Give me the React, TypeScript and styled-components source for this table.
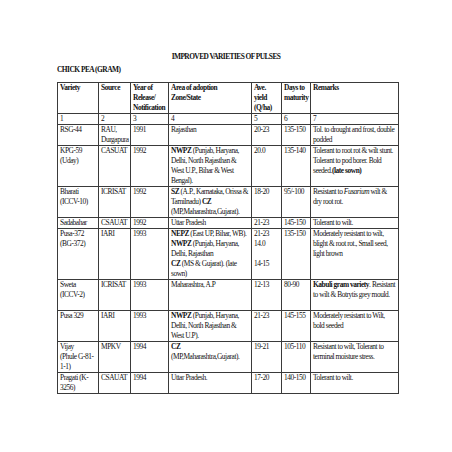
import React from 'react'
import styled, { createGlobalStyle } from 'styled-components'

const GlobalStyle = createGlobalStyle`
  html, body {
    margin: 0;
    padding: 0;
    background: #ffffff;
  }
  body {
    font-family: "Liberation Serif", "Times New Roman", serif;
    color: #111111;
  }
`

const Page = styled.div`
  width: 452px;
  height: 452px;
  padding-top: 52px;
  box-sizing: border-box;
  overflow: hidden;
`

const Title = styled.h1`
  margin: 0;
  font-size: 7.4px;
  line-height: 10px;
  font-weight: bold;
  letter-spacing: -0.55px;
  text-align: center;
`

const Section = styled.h2`
  margin: 3px 0 0 57px;
  font-size: 7.4px;
  line-height: 10px;
  font-weight: bold;
  letter-spacing: -0.5px;
`

const Table = styled.table`
  margin: 7px 0 0 57px;
  border-collapse: collapse;
  table-layout: fixed;
  width: 341px;
`

const Row = styled.tr<{ $h: number }>`
  height: ${props => props.$h}px;
`

const Cell = styled.td<{ $head?: boolean }>`
  border: 1px solid #3a3a3a;
  padding: 0 2px;
  vertical-align: top;
  font-size: 7.4px;
  line-height: 10px;
  letter-spacing: -0.44px;
  white-space: nowrap;
  overflow: hidden;
  font-weight: ${props => (props.$head ? 'bold' : 'normal')};
`

const cols = [41, 32, 38, 83, 30, 29, 88]

const head: React.ReactNode[] = [
  'Variety',
  'Source',
  <>Year of<br />Release/<br />Notification</>,
  <>Area of adoption<br />Zone/State</>,
  <>Ave.<br />yield<br />(Q/ha)</>,
  <>Days to<br />maturity</>,
  'Remarks',
]

const rows: { h: number; cells: React.ReactNode[] }[] = [
  { h: 10, cells: ['1', '2', '3', '4', '5', '6', '7'] },
  {
    h: 20,
    cells: [
      'RSG-44',
      <>RAU,<br />Durgapura</>,
      '1991',
      'Rajasthan',
      '20-23',
      '135-150',
      <>Tol. to drought and frost, double<br />podded</>,
    ],
  },
  {
    h: 41,
    cells: [
      <>KPG-59<br />(Uday)</>,
      'CASUAT',
      '1992',
      <><b>NWPZ</b> (Punjab, Haryana,<br />Delhi, North Rajasthan &amp;<br />West U.P., Bihar &amp; West<br />Bengal).</>,
      '20.0',
      '135-140',
      <>Tolerant to root rot &amp; wilt stunt.<br />Tolerant to pod borer. Bold<br />seeded.<b>(late sown)</b></>,
    ],
  },
  {
    h: 30,
    cells: [
      <>Bharati<br />(ICCV-10)</>,
      'ICRISAT',
      '1992',
      <><b>SZ</b> (A.P., Karnataka, Orissa &amp;<br />Tamilnadu) <b>CZ</b><br />(MP,Maharashtra,Gujarat).</>,
      '18-20',
      '95/-100',
      <>Resistant to <i>Fusarium</i> wilt &amp;<br />dry root rot.</>,
    ],
  },
  {
    h: 10,
    cells: ['Sadabahar', 'CSAUAT', '1992', 'Uttar Pradesh', '21-23', '145-150', 'Tolerant to wilt.'],
  },
  {
    h: 51,
    cells: [
      <>Pusa-372<br />(BG-372)</>,
      'IARI',
      '1993',
      <><b>NEPZ</b> (East UP, Bihar, WB).<br /><b>NWPZ</b> (Punjab, Haryana,<br />Delhi, Rajasthan<br /><b>CZ</b> (MS &amp; Gujarat). (late<br />sown)</>,
      <>21-23<br />14.0<br /><br />14-15</>,
      '135-150',
      <>Moderately resistant to wilt,<br />blight &amp; root rot., Small seed,<br />light brown</>,
    ],
  },
  {
    h: 31,
    cells: [
      <>Sweta<br />(ICCV-2)</>,
      'ICRISAT',
      '1993',
      'Maharashtra, A.P',
      '12-13',
      '80-90',
      <><b>Kabuli gram variety</b>. Resistant<br />to wilt &amp; Botrytis grey mould.</>,
    ],
  },
  {
    h: 29,
    cells: [
      'Pusa 329',
      'IARI',
      '1993',
      <><b>NWPZ</b> (Punjab, Haryana,<br />Delhi, North Rajasthan &amp;<br />West U.P).</>,
      '21-23',
      '145-155',
      <>Moderately resistant to Wilt,<br />bold seeded</>,
    ],
  },
  {
    h: 30,
    cells: [
      <>Vijay<br />(Phule G-81-<br />1-1)</>,
      'MPKV',
      '1994',
      <><b>CZ</b><br />(MP,Maharashtra,Gujarat).</>,
      '19-21',
      '105-110',
      <>Resistant to wilt, Tolerant to<br />terminal moisture stress.</>,
    ],
  },
  {
    h: 20,
    cells: [
      <>Pragati (K-<br />3256)</>,
      'CSAUAT',
      '1994',
      'Uttar Pradesh.',
      '17-20',
      '140-150',
      'Tolerant to wilt.',
    ],
  },
]

const App = () => {
  return (
    <Page>
      <GlobalStyle />
      <Title>IMPROVED VARIETIES OF PULSES</Title>
      <Section>CHICK PEA (GRAM)</Section>
      <Table>
        <colgroup>
          {cols.map((w, i) => (
            <col key={i} style={{ width: w }} />
          ))}
        </colgroup>
        <tbody>
          <Row $h={30}>
            {head.map((c, i) => (
              <Cell key={i} $head>{c}</Cell>
            ))}
          </Row>
          {rows.map((r, i) => (
            <Row key={i} $h={r.h}>
              {r.cells.map((c, j) => (
                <Cell key={j}>{c}</Cell>
              ))}
            </Row>
          ))}
        </tbody>
      </Table>
    </Page>
  )
}

export default App
